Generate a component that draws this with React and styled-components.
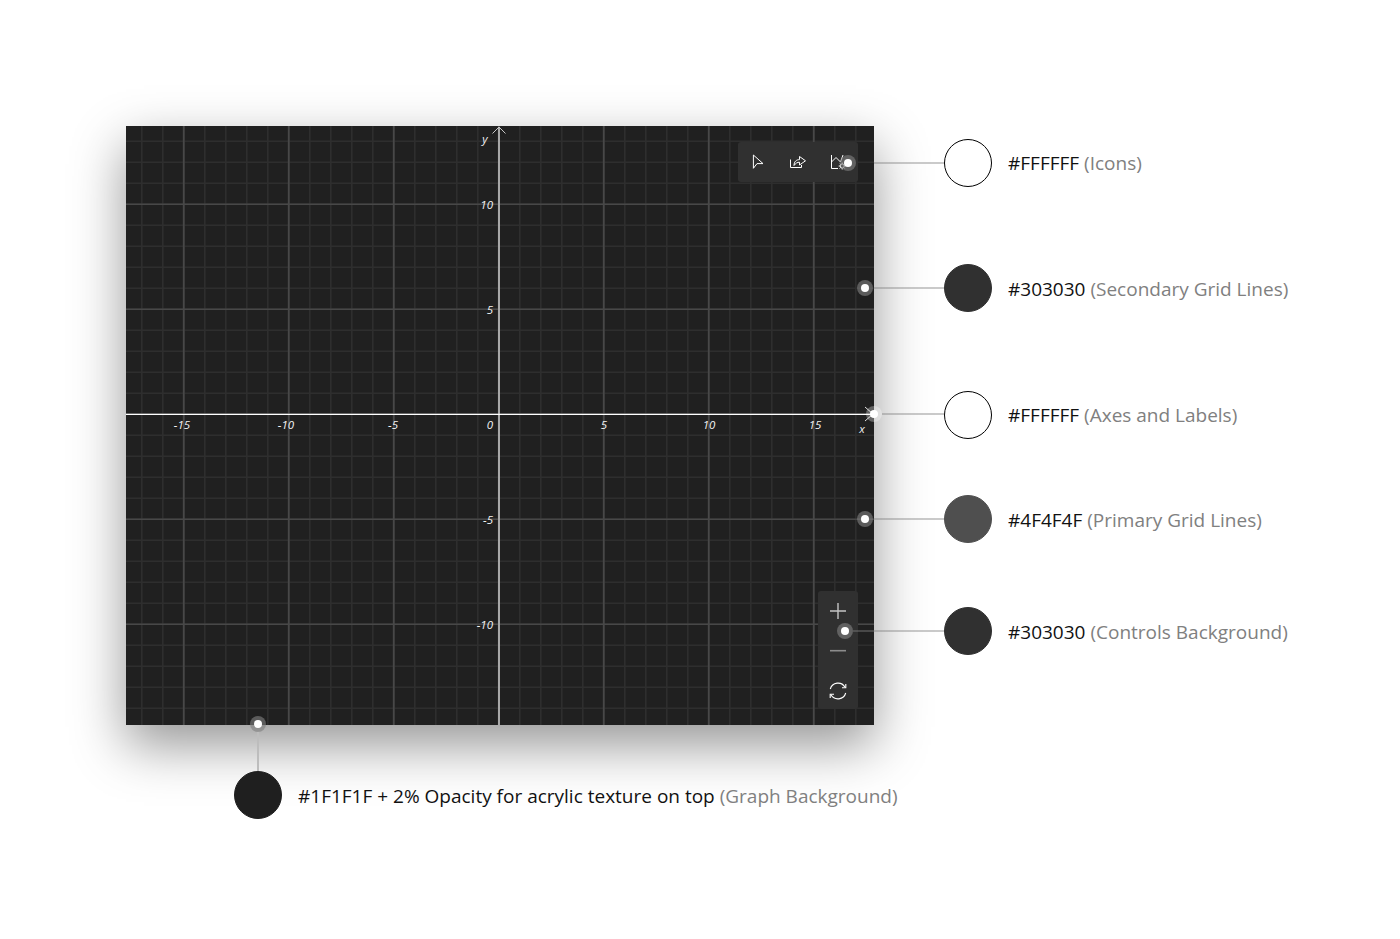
import React from "react";
import styled, { createGlobalStyle } from "styled-components";

const Global = createGlobalStyle`
  html, body { margin: 0; padding: 0; background: #fff; }
  body { font-family: "Open Sans", "Noto Sans", "Liberation Sans", sans-serif; }
`;

const Page = styled.div`
  width: 1400px;
  height: 939px;
  box-sizing: border-box;
  padding-top: 126px;
  padding-left: 126px;
  overflow: hidden;
  background: #fff;
`;
const TopArea = styled.div`
  display: flex;
  align-items: flex-start;
`;
const Graph = styled.div`
  position: relative;
  width: 748px;
  height: 599px;
  flex: none;
  background: #202020;
  box-shadow: 0 20px 50px rgba(0, 0, 0, 0.42);
`;
const GridSvg = styled.svg`
  display: block;
`;
const Tick = styled.text`
  font-family: "Open Sans", "Noto Sans", sans-serif;
  font-size: 11.5px;
  font-style: italic;
  font-weight: 400;
  fill: #f4f4f4;
`;
const Toolbar = styled.div`
  position: absolute;
  top: 16px;
  right: 16px;
  width: 120px;
  height: 40px;
  display: flex;
  background: #303030;
  border-radius: 3px;
`;
const ZoomBar = styled.div`
  position: absolute;
  top: 465px;
  right: 16px;
  width: 40px;
  height: 118px;
  display: flex;
  flex-direction: column;
  background: #303030;
  border-radius: 3px;
`;
const ToolCell = styled.div`
  width: 40px;
  height: 40px;
  flex: none;
  display: flex;
  align-items: center;
  justify-content: center;
`;
const Marker = styled.span`
  position: absolute;
  left: ${(p) => p.$x - 8}px;
  top: ${(p) => p.$y - 8}px;
  width: 16px;
  height: 16px;
  border-radius: 50%;
  background: ${(p) => (p.$glow ? "rgba(255,255,255,0.3)" : "rgba(128,128,128,0.62)")};
  z-index: 3;
  &::after {
    content: "";
    position: absolute;
    left: 4px;
    top: 4px;
    width: 8px;
    height: 8px;
    border-radius: 50%;
    background: #fff;
  }
`;
const Legend = styled.div`
  display: flex;
  flex-direction: column;
  margin-left: 70px;
`;
const Row = styled.div`
  position: relative;
  display: flex;
  align-items: center;
  gap: 16px;
  height: 48px;
  margin-top: ${(p) => p.$top}px;
  white-space: nowrap;
`;
const Leader = styled.span`
  position: absolute;
  right: 100%;
  top: ${(p) => p.$y}px;
  width: ${(p) => p.$len}px;
  height: 2px;
  background: rgba(128, 128, 128, 0.42);
`;
const Swatch = styled.span`
  position: relative;
  flex: none;
  width: 48px;
  height: 48px;
  box-sizing: border-box;
  border-radius: 50%;
  background: ${(p) => p.$color};
  border: 1px solid ${(p) => (p.$color === "#ffffff" ? "#000" : p.$color)};
`;
const Label = styled.span`
  font-size: 19px;
  line-height: 24px;
  color: #111;
  padding-top: ${(p) => (p.$low ? 2 : 0)}px;
`;
const Muted = styled.span`
  color: #808080;
`;
const BottomRow = styled(Row)`
  margin-left: 108px;
`;
const DropLine = styled.span`
  position: absolute;
  left: 23px;
  bottom: 100%;
  width: 2px;
  height: 40px;
  background: #bdbdbd;
`;

const W = 748;
const H = 599;
const cols = Array.from({ length: 36 }, (_, i) => 15.75 + i * 21);
const rows = Array.from({ length: 29 }, (_, i) => 15.25 + i * 21);
const isPrimaryCol = (i) => (i - 2) % 5 === 0;
const isPrimaryRow = (i) => (i - 3) % 5 === 0;

const xTicks = [
  ["-15", 56],
  ["-10", 160],
  ["-5", 267],
  ["0", 364],
  ["5", 478],
  ["10", 583],
  ["15", 689],
];
const yTicks = [
  ["10", 83],
  ["5", 188],
  ["-5", 398],
  ["-10", 503],
];

function GridChart() {
  return (
    <GridSvg width={W} height={H} viewBox={`0 0 ${W} ${H}`}>
      {cols.map((x, i) => (
        <line key={`v${i}`} x1={x} x2={x} y1="0" y2={H} stroke="#2e2e2e" strokeWidth="1.7" />
      ))}
      {rows.map((y, i) => (
        <line key={`h${i}`} x1="0" x2={W} y1={y} y2={y} stroke="#2e2e2e" strokeWidth="1.7" />
      ))}
      {cols.map((x, i) =>
        isPrimaryCol(i) ? <line key={`pv${i}`} x1={x} x2={x} y1="0" y2={H} stroke="#484848" strokeWidth="1.8" /> : null
      )}
      {rows.map((y, i) =>
        isPrimaryRow(i) ? <line key={`ph${i}`} x1="0" x2={W} y1={y} y2={y} stroke="#484848" strokeWidth="1.6" /> : null
      )}
      <line x1="373" x2="373" y1="1" y2={H} stroke="#a8a8a8" strokeWidth="2" />
      <line x1="0" x2={W} y1="288.4" y2="288.4" stroke="#ffffff" strokeWidth="1.2" />
      <path d="M366.5 7.5 L373 1 L379.5 7.5" fill="none" stroke="#c8c8c8" strokeWidth="1" />
      <path d="M739 281 L747 288 L739 295" fill="none" stroke="#e0e0e0" strokeWidth="1" />
      {xTicks.map(([t, x]) => (
        <Tick key={t} x={x} y="303" textAnchor="middle">{t}</Tick>
      ))}
      {yTicks.map(([t, y]) => (
        <Tick key={t} x="367" y={y} textAnchor="end">{t}</Tick>
      ))}
      <Tick x="736" y="307" textAnchor="middle">x</Tick>
      <Tick x="359" y="17" textAnchor="middle">y</Tick>
    </GridSvg>
  );
}

const CursorIcon = () => (
  <svg width="20" height="20" viewBox="0 0 20 20" fill="none" stroke="#fff" strokeWidth="1">
    <path d="M5.4 3 V16.3 L9 11.6 H15 Z" />
  </svg>
);
const ShareIcon = () => (
  <svg width="20" height="20" viewBox="0 0 20 20" fill="none" stroke="#fff" strokeWidth="1">
    <path d="M2.5 7.5 V15.5 H13.5 V13" />
    <path d="M6 13.5 C6 9.5 8.5 7.6 11.5 7.6 V4.5 L17.5 8.8 L11.5 13 V10.2 C9.5 10.2 7.5 11.2 6 13.5 Z" />
  </svg>
);
const GraphSettingsIcon = () => (
  <svg width="20" height="20" viewBox="0 0 20 20" fill="none" stroke="#fff" strokeWidth="1">
    <path d="M3.5 3 V16.5 H10" />
    <path d="M3.5 10 L8 5.5 L12.5 10 L15 3" />
    <circle cx="14.2" cy="14" r="2" />
    <path d="M14.2 10.5 V12 M14.2 16 V17.5 M10.7 14 H12.2 M16.2 14 H17.7 M11.7 11.5 L12.8 12.6 M15.6 15.4 L16.7 16.5 M11.7 16.5 L12.8 15.4 M15.6 12.6 L16.7 11.5" />
  </svg>
);
const PlusIcon = () => (
  <svg width="20" height="20" viewBox="0 0 20 20" fill="none" stroke="#c4c4c4" strokeWidth="1.4">
    <path d="M2 10 H18 M10 2 V18" />
  </svg>
);
const MinusIcon = () => (
  <svg width="20" height="20" viewBox="0 0 20 20" fill="none" stroke="#8c8c8c" strokeWidth="1.6">
    <path d="M2 9.7 H18" />
  </svg>
);
const RefreshIcon = () => (
  <svg width="20" height="20" viewBox="0 0 20 20" fill="none" stroke="#fff" strokeWidth="1.1">
    <path d="M2.3 8 A8 8 0 0 1 17 6.2" />
    <path d="M17.7 12 A8 8 0 0 1 3 13.8" />
    <path d="M17.8 3 V6.8 H14" />
    <path d="M2.2 17 V13.2 H6" />
  </svg>
);

const legend = [
  { top: 13, color: "#ffffff", code: "#FFFFFF", name: "(Icons)", y: 23, len: 70, low: false },
  { top: 77, color: "#303030", code: "#303030", name: "(Secondary Grid Lines)", y: 23, len: 70, low: true },
  { top: 79, color: "#ffffff", code: "#FFFFFF", name: "(Axes and Labels)", y: 22, len: 62, low: false },
  { top: 56, color: "#4f4f4f", code: "#4F4F4F", name: "(Primary Grid Lines)", y: 23, len: 70, low: true },
  { top: 64, color: "#303030", code: "#303030", name: "(Controls Background)", y: 23, len: 91, low: true },
];

export default function App() {
  return (
    <Page>
      <Global />
      <TopArea>
        <Graph>
          <GridChart />
          <Toolbar>
            <ToolCell><CursorIcon /></ToolCell>
            <ToolCell><ShareIcon /></ToolCell>
            <ToolCell><GraphSettingsIcon /></ToolCell>
          </Toolbar>
          <ZoomBar>
            <ToolCell><PlusIcon /></ToolCell>
            <ToolCell><MinusIcon /></ToolCell>
            <ToolCell><RefreshIcon /></ToolCell>
          </ZoomBar>
          <Marker $x={722} $y={37} />
          <Marker $x={739} $y={162} />
          <Marker $x={748} $y={288} $glow />
          <Marker $x={739} $y={393} />
          <Marker $x={719} $y={505} />
          <Marker $x={132} $y={598} />
        </Graph>
        <Legend>
          {legend.map((r) => (
            <Row key={r.name} $top={r.top}>
              <Leader $y={r.y} $len={r.len} />
              <Swatch $color={r.color} />
              <Label $low={r.low}>
                {r.code} <Muted>{r.name}</Muted>
              </Label>
            </Row>
          ))}
        </Legend>
      </TopArea>
      <BottomRow $top={46}>
        <DropLine />
        <Swatch $color="#1f1f1f" />
        <Label $low>
          #1F1F1F + 2% Opacity for acrylic texture on top <Muted>(Graph Background)</Muted>
        </Label>
      </BottomRow>
    </Page>
  );
}
